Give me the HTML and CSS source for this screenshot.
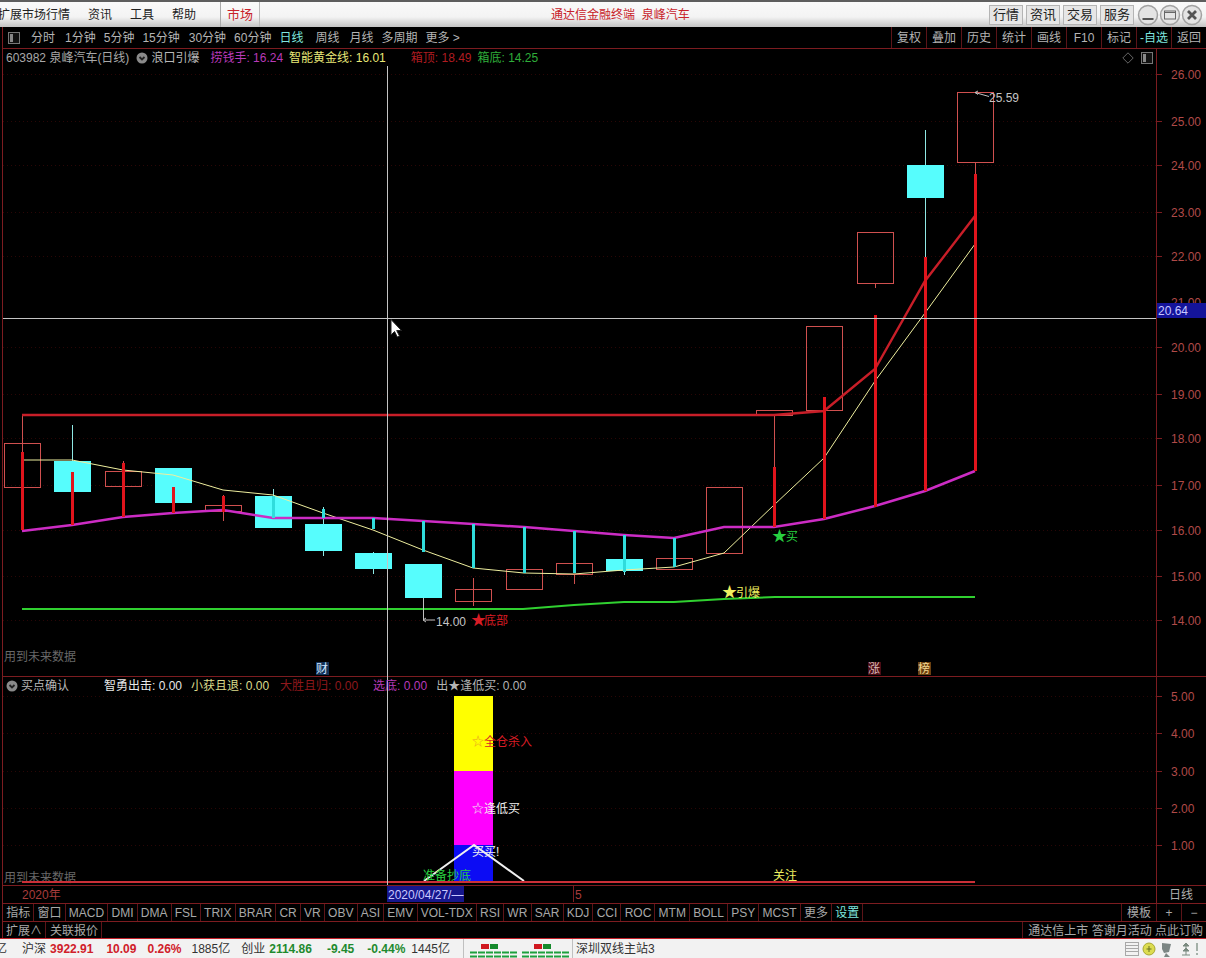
FILE: index.html
```html
<!DOCTYPE html>
<html lang="zh-CN">
<head>
<meta charset="utf-8">
<title>通达信金融终端 泉峰汽车</title>
<link rel="stylesheet" href="styles.css">
</head>
<body>
<div class="app">
  <header class="titlebar">
    <nav class="menu">
      <span class="menu-first">扩展市场行情</span><span>资讯</span><span>工具</span><span>帮助</span>
    </nav>
    <div class="market-tab">市场</div>
    <div class="app-title">通达信金融终端&nbsp;&nbsp;泉峰汽车</div>
    <div class="title-buttons">
      <span class="tbtn">行情</span><span class="tbtn">资讯</span><span class="tbtn">交易</span><span class="tbtn">服务</span>
    </div>
    <div class="win-controls">
      <svg class="win" viewBox="0 0 22 22"><circle class="win-ring" cx="11" cy="11" r="9.5"/><path class="win-glyph" d="M5.5 15h11"/></svg>
      <svg class="win" viewBox="0 0 22 22"><circle class="win-ring" cx="11" cy="11" r="9.5"/><rect class="win-glyph-thin" x="5.5" y="7" width="11" height="8"/><path class="win-glyph-thin" d="M5.5 8.5h11"/></svg>
      <svg class="win" viewBox="0 0 22 22"><circle class="win-ring" cx="11" cy="11" r="9.5"/><path class="win-glyph-x" d="M7 7l8 8M15 7l-8 8"/></svg>
    </div>
  </header>

  <div class="frame">
    <div class="toolbar">
      <svg class="panel-icon tool-icon" viewBox="0 0 12 12"><rect class="pi-box" x=".5" y=".5" width="11" height="11"/><rect class="pi-fill" x="2" y="2" width="3" height="8"/></svg>
      <div class="periods">
        <span class="p-first">分时</span><span>1分钟</span><span>5分钟</span><span>15分钟</span><span class="p-wide">30分钟</span><span>60分钟</span>
      </div>
      <div class="periods wide">
        <span class="cyan-t p-day">日线</span><span>周线</span><span class="p-month">月线</span><span>多周期</span><span>更多 &gt;</span>
      </div>
      <div class="tool-right">
        <span>复权</span><span>叠加</span><span>历史</span><span>统计</span><span>画线</span><span>F10</span><span>标记</span><span class="cyan-t">-自选</span><span>返回</span>
      </div>
    </div>

    <section class="panel panel-main">
      <div class="legend legend-main">
        <span class="l-code">603982 泉峰汽车(日线)</span>
        <svg class="chev" viewBox="0 0 12 12"><circle class="chev-c" cx="6" cy="6" r="5.5"/><path class="chev-p" d="M3.5 5l2.5 2.5L8.5 5"/></svg>
        <span class="l-name">浪口引爆</span>
        <span class="c-mag m-a">捞钱手: 16.24</span>
        <span class="c-yel m-b">智能黄金线: 16.01</span>
        <span class="c-red m-c">箱顶: 18.49</span>
        <span class="c-grn m-d">箱底: 14.25</span>
        <span class="legend-end">
          <svg class="diamond" viewBox="0 0 12 12"><path d="M6 .8L11.2 6 6 11.2.8 6z"/></svg>
          <svg class="panel-icon" viewBox="0 0 12 12"><rect class="pi-box" x=".5" y=".5" width="11" height="11"/><rect class="pi-fill" x="2" y="2" width="3" height="8"/></svg>
        </span>
      </div>
      <svg class="chart" width="1203" height="628" viewBox="3 48 1203 628">
        <g class="grid">
          <path d="M3 74.5H1156M3 121.5H1156M3 165.5H1156M3 212.5H1156M3 256.5H1156M3 347.5H1156M3 394.5H1156M3 438.5H1156M3 485.5H1156M3 530.5H1156M3 576.5H1156M3 620.5H1156"/>
        </g>

        <g class="wick-c">
          <path d="M72.5 425V461M273.5 489V496M323.5 507V556M373.5 552V574M423.5 598V620M925.5 130V258M624.5 571V575"/>
        </g>
        <g class="wick-r">
          <path d="M22.5 415V452M123.5 461V517M223.5 495V521M473.5 578V606M574.5 575V584M774.5 416V467M875.5 284V288M975.5 162V174"/>
        </g>

        <g class="body-c">
          <rect x="54" y="461" width="37" height="31"/>
          <rect x="155" y="468" width="37" height="35"/>
          <rect x="255" y="496" width="37" height="32"/>
          <rect x="305" y="524" width="37" height="27"/>
          <rect x="355" y="553" width="37" height="16"/>
          <rect x="405" y="564" width="37" height="34"/>
          <rect x="606" y="559" width="37" height="12"/>
          <rect x="907" y="165" width="37" height="33"/>
        </g>
        <g class="body-h">
          <rect x="4.5" y="443.5" width="36" height="44"/>
          <rect x="105.5" y="471.5" width="36" height="15"/>
          <rect x="205.5" y="505.5" width="36" height="6"/>
          <rect x="455.5" y="589.5" width="36" height="12"/>
          <rect x="506.5" y="569.5" width="36" height="20"/>
          <rect x="556.5" y="563.5" width="36" height="11"/>
          <rect x="656.5" y="558.5" width="36" height="11"/>
          <rect x="706.5" y="487.5" width="36" height="66"/>
          <rect x="756.5" y="410.5" width="36" height="5"/>
          <rect x="806.5" y="326.5" width="36" height="84"/>
          <rect x="857.5" y="232.5" width="36" height="51"/>
          <rect x="957.5" y="92.5" width="36" height="70"/>
        </g>

        <polyline class="ln-top" points="22,415 774,415 824,411 875,369 925,281 975,216"/>
        <polyline class="ln-yel" points="22,460 72,460 123,470 173,475 223,490 273,495 323,513 373,530 423,550 473,568 524,573 574,574 624,570 674,567 724,553 774,505 824,458 875,381 925,313 975,244"/>
        <polyline class="ln-mag" points="22,531 72,525 123,517 173,513 223,510 273,518 323,518 373,518 423,521 473,524 524,527 574,531 624,535 674,538 724,527 774,527 824,519 875,506 925,491 975,471"/>
        <polyline class="ln-grn" points="22,609 523,609 574,605 624,602 674,602 724,599 775,597 975,597"/>

        <g class="bar-r">
          <path d="M22.5 452V530M72.5 472V525M123.5 463V517M173.5 487V513M223.5 496V512M774.5 467V527M824.5 397V519M875.5 315V507M925.5 257V491M975.5 174V471"/>
        </g>
        <g class="bar-c">
          <path d="M273.5 496V518M323.5 509V518M373.5 518V529M423.5 521V552M473.5 524V568M524.5 527V573M574.5 531V573M624.5 535V572M674.5 538V567"/>
        </g>

        <path class="leader" d="M423.5 598V620H435M426 618l-3 2 3 2M975 92.5l14 4M978 91l-3 1.500 3 2"/>
        <text class="t t-white" x="989" y="102">25.59</text>
        <text class="t t-white" x="436" y="626">14.00</text>
        <text class="t t-red" x="471" y="625"><tspan class="star">★</tspan><tspan x="484">底部</tspan></text>
        <text class="t t-yel" x="722" y="597"><tspan class="star">★</tspan><tspan x="736">引爆</tspan></text>
        <text class="t t-grn" x="772" y="541"><tspan class="star">★</tspan><tspan x="786">买</tspan></text>
        <text class="t t-dim" x="4" y="661">用到未来数据</text>

        <rect class="tag-blue" x="316" y="662" width="13" height="13"/>
        <text class="t t-tag" x="316" y="673">财</text>
        <rect class="tag-red" x="868" y="662" width="13" height="13"/>
        <text class="t t-tag2" x="868" y="673">涨</text>
        <rect class="tag-gold" x="918" y="662" width="13" height="13"/>
        <text class="t t-tag3" x="918" y="673">榜</text>

        <path class="cross" d="M387.500 66V676M3 318.500H1156"/>
        <path class="axis" d="M1156.500 48V676M1156 74.500h6M1156 121.500h6M1156 165.500h6M1156 212.500h6M1156 256.500h6M1156 347.500h6M1156 394.500h6M1156 438.500h6M1156 485.500h6M1156 530.500h6M1156 576.500h6M1156 620.500h6"/>
        <g class="t t-axis">
          <text x="1171" y="79">26.00</text><text x="1171" y="126">25.00</text><text x="1171" y="170">24.00</text>
          <text x="1171" y="217">23.00</text><text x="1171" y="261">22.00</text><text x="1171" y="307">21.00</text>
          <text x="1171" y="352">20.00</text><text x="1171" y="399">19.00</text><text x="1171" y="443">18.00</text>
          <text x="1171" y="490">17.00</text><text x="1171" y="535">16.00</text><text x="1171" y="581">15.00</text>
          <text x="1171" y="625">14.00</text>
        </g>
        <rect class="price-box" x="1157" y="303" width="49" height="15"/>
        <text class="t t-price" x="1158" y="315">20.64</text>
        <path class="cursor" d="M391 319.500V335l3.500-3.500 2.800 5.500 2.200-1-2.800-5.500H401.500z"/>
      </svg>
    </section>

    <section class="panel panel-sub">
      <div class="legend legend-sub">
        <svg class="chev" viewBox="0 0 12 12"><circle class="chev-c" cx="6" cy="6" r="5.500"/><path class="chev-p" d="M3.500 5l2.500 2.500L8.500 5"/></svg>
        <span class="l-name s-0">买点确认</span>
        <span class="c-white s-a">智勇出击: 0.00</span>
        <span class="c-lyel s-b">小获且退: 0.00</span>
        <span class="c-dred s-b2">大胜且归: 0.00</span>
        <span class="c-mag s-c">选底: 0.00</span>
        <span class="c-gray s-d">出★逢低买: 0.00</span>
      </div>
      <svg class="chart" width="1203" height="209" viewBox="3 676 1203 209">
        <g class="grid"><path d="M3 696.500H1156M3 733.500H1156M3 771.500H1156M3 808.500H1156M3 845.500H1156"/></g>
        <rect class="b-yel" x="454" y="696" width="39" height="75"/>
        <rect class="b-mag" x="454" y="771" width="39" height="74"/>
        <rect class="b-blu" x="454" y="845" width="39" height="36"/>
        <polyline class="tri" points="424,881 474,845 524,881"/>
        <text class="t t-red" x="472" y="746"><tspan class="t-orange">☆</tspan>全仓杀入</text>
        <text class="t t-white2" x="472" y="813">☆逢低买</text>
        <text class="t t-white2" x="472" y="856">买买!</text>
        <text class="t t-grn" x="423" y="880">准备抄底</text>
        <text class="t t-yel" x="773" y="880">关注</text>
        <text class="t t-dim" x="4" y="882">用到未来数据</text>
        <path class="base" d="M22 882H975"/>
        <path class="cross" d="M387.500 676V885"/>
        <path class="axis" d="M1156.500 676V885M1156 696.500h6M1156 733.500h6M1156 771.500h6M1156 808.500h6M1156 845.500h6"/>
        <g class="t t-axis">
          <text x="1171" y="701">5.00</text><text x="1171" y="738">4.00</text><text x="1171" y="776">3.00</text><text x="1171" y="813">2.00</text><text x="1171" y="850">1.00</text>
        </g>
      </svg>
    </section>

    <div class="date-axis">
      <svg class="chart" width="1203" height="18" viewBox="3 885 1203 18">
        <rect class="date-box" x="387" y="886" width="77" height="16"/>
        <text class="t t-year" x="22" y="899">2020年</text>
        <text class="t t-date" x="388" y="899">2020/04/27/—</text>
        <path class="axis" d="M573.500 886V902M1156.500 885V903"/>
        <text class="t t-year" x="575" y="899">5</text>
        <text class="t t-gray" x="1169" y="899">日线</text>
      </svg>
    </div>

    <div class="tabs">
      <span>指标</span><span>窗口</span><span>MACD</span><span>DMI</span><span>DMA</span><span>FSL</span><span>TRIX</span><span>BRAR</span><span>CR</span><span>VR</span><span>OBV</span><span>ASI</span><span>EMV</span><span>VOL-TDX</span><span>RSI</span><span>WR</span><span>SAR</span><span>KDJ</span><span>CCI</span><span>ROC</span><span>MTM</span><span>BOLL</span><span>PSY</span><span>MCST</span><span>更多</span><span class="cyan-t">设置</span>
      <div class="tabs-right"><span>模板</span><span class="sym">+</span><span class="sym">−</span></div>
    </div>

    <div class="extbar">
      <span>扩展∧</span><span class="ext-rel">关联报价</span>
      <div class="notice">通达信上市 答谢月活动 点此订购</div>
    </div>
  </div>

  <footer class="status">
    <span class="s-cut">亿</span>
    <span class="s-lab">沪深</span>
    <b class="up n1">3922.91</b><b class="up n2">10.09</b><b class="up n3">0.26%</b>
    <span class="n3b">1885亿</span>
    <span class="s-lab2">创业</span>
    <b class="down n1">2114.86</b><b class="down n2b">-9.45</b><b class="down n3c">-0.44%</b>
    <span class="n3d">1445亿</span>
    <svg class="mini" width="110" height="20" viewBox="0 0 110 20">
      <path class="mini-sep" d="M.5 0V20M109.500 0V20"/>
      <rect class="m-r" x="18" y="5" width="8" height="5"/><rect class="m-g" x="27" y="5" width="8" height="5"/>
      <rect class="m-r" x="71" y="5" width="8" height="5"/><rect class="m-g" x="80" y="5" width="8" height="5"/>
      <path class="m-dash" d="M7 13.500h47M7 17.500h47M59 13.500h47M59 17.500h47"/>
    </svg>
    <span class="s-site">深圳双线主站3</span>
    <svg class="s-icons" width="80" height="20" viewBox="0 0 80 20">
      <rect class="ic-doc" x="1.500" y="3.500" width="13" height="13"/>
      <path class="ic-doc" d="M1.500 6.500h13M1.500 9.500h13M1.500 12.500h13"/>
      <circle class="ic-coin" cx="25" cy="10" r="6"/><path class="ic-coin-m" d="M22.500 10h5M25 7v6"/>
      <path class="ic-sat" d="M38 4l9 1-2 8-5 1-2-4zM42 14l-2 4h6z"/>
      <path class="ic-arr" d="M62 4l-3 3h6zM62 9l-3 3h6zM58 16h8M62 6v10"/>
      <path class="ic-ex" d="M73 4v8M73 14v2"/>
    </svg>
  </footer>
</div>
</body>
</html>
```
FILE: styles.css
```css
* { box-sizing: border-box; }
html, body { margin: 0; padding: 0; background: #000; }
body { font: 12px/1 "Liberation Sans", "Noto Sans CJK SC", sans-serif; }
.app { width: 1206px; height: 958px; overflow: hidden; display: flex; flex-direction: column; background: #000; }

/* title bar */
.titlebar { height: 27px; flex: none; display: flex; align-items: center; border-top: 2px solid #5e5e5e;
  background: linear-gradient(#fafafa, #f3f3f3 60%, #c4c4c4); color: #222; font-size: 12px; }
.menu { display: flex; gap: 18px; width: 222px; margin-left: -2px; flex: none; }
.menu span { white-space: nowrap; }
.market-tab { width: 40px; height: 25px; flex: none; display: flex; align-items: center; justify-content: center; font-size: 13px;
  color: #c8222a; border-left: 1px solid #aaa; border-right: 1px solid #bbb; }
.app-title { margin-left: 291px; width: 438px; flex: none; color: #c8222a; white-space: nowrap; }
.title-buttons { display: flex; gap: 3px; font-size: 13px; }
.tbtn { width: 34px; height: 20px; display: flex; align-items: center; justify-content: center;
  background: #e6e6e6; border: 1px solid #b4b4b4; color: #222; }
.win-controls { display: flex; margin-left: 3px; }
.win { width: 22px; height: 22px; display: block; }
.win-ring { fill: #e4e4e4; stroke: #a2a2a2; stroke-width: 1.500; }
.win-glyph { stroke: #555; stroke-width: 2; fill: none; }
.win-glyph-thin { stroke: #666; stroke-width: 1; fill: none; }
.win-glyph-x { stroke: #555; stroke-width: 2.800; fill: none; }

/* frame */
.frame { margin-left: 2px; border-left: 1px solid #7c1c20; flex: none; height: 911px; display: flex; flex-direction: column; }

.toolbar { height: 21px; flex: none; display: flex; align-items: center; color: #b4b4b4; }
.tool-icon { margin-left: 5px; }
.panel-icon { width: 12px; height: 12px; display: block; flex: none; }
.pi-box { fill: #111; stroke: #777; }
.pi-fill { fill: #888; }
.periods { display: flex; gap: 8px; margin-left: 11px; white-space: nowrap; }
.periods.wide { gap: 8px; margin-left: 8px; }
.p-first { margin-right: 2px; }
.p-wide { margin-left: 1px; }
.p-day { margin-right: 4px; }
.p-month { margin-right: 0; margin-left: 2px; }
.cyan-t { color: #7fe6de; }
.tool-right { margin-left: auto; display: flex; height: 21px; }
.tool-right span { width: 35px; display: flex; align-items: center; justify-content: center; border-left: 1px solid #5c1418; white-space: nowrap; }

/* panels */
.panel { position: relative; flex: none; border-top: 1px solid #7c1c20; }
.panel-main { height: 628px; }
.panel-sub { height: 209px; }
.chart { display: block; margin-top: -1px; }
.legend { position: absolute; left: 0; top: 0; right: 0; display: flex; align-items: center; height: 18px; color: #a8a8a8; white-space: nowrap; }
.legend-main { padding-left: 3px; }
.legend-sub { padding-left: 3px; }
.legend-end { position: absolute; left: 1119px; top: 3px; display: flex; gap: 7px; }
.chev { width: 12px; height: 12px; flex: none; margin-left: 7px; }
.legend-sub .chev { margin-left: 0; }
.chev-c { fill: #8a8a8a; }
.chev-p { fill: none; stroke: #222; stroke-width: 1.800; }
.diamond { width: 12px; height: 12px; fill: none; stroke: #666; }
.l-name { margin-left: 3px; color: #b8b8b8; }
.c-mag { color: #b83ab8; } .c-yel { color: #e8e878; } .c-red { color: #b01c20; } .c-grn { color: #2fae3a; }
.c-white { color: #e8e8e8; } .c-lyel { color: #dcdc8c; } .c-dred { color: #8e181c; } .c-gray { color: #b4b4b4; }
.m-a { margin-left: 11px; } .m-b { margin-left: 6px; } .m-c { margin-left: 25px; } .m-d { margin-left: 6px; }
.s-0 { margin-left: 3px; } .s-a { margin-left: 35px; } .s-b { margin-left: 9px; } .s-b2 { margin-left: 11px; } .s-c { margin-left: 15px; } .s-d { margin-left: 9px; }

/* svg drawing */
.grid path { stroke: #2a0606; stroke-dasharray: 1 3; fill: none; }
.wick-c path { stroke: #8fe8e4; fill: none; }
.wick-r path { stroke: #d0504f; fill: none; }
.body-c rect { fill: #56fdfd; }
.body-h rect { fill: none; stroke: #d0504f; }
.ln-top { fill: none; stroke: #c81e28; stroke-width: 2.400; }
.ln-yel { fill: none; stroke: #eeee9e; stroke-width: 1; }
.ln-mag { fill: none; stroke: #cc2cc4; stroke-width: 2.500; }
.ln-grn { fill: none; stroke: #30d030; stroke-width: 2; }
.bar-r path { stroke: #e0141c; stroke-width: 3; fill: none; }
.bar-c path { stroke: #30dcdc; stroke-width: 3; fill: none; }
.leader { stroke: #c0c0c0; fill: none; }
.cross { stroke: #c4c4c4; fill: none; }
.axis { stroke: #7c1c20; fill: none; }
.cursor { fill: #fff; stroke: #222; stroke-width: 1; }
.t { font: 12px "Liberation Sans", "Noto Sans CJK SC", sans-serif; }
.star { font-size: 15px; }
.t-white { fill: #c4c4c4; }
.t-white2 { fill: #f0f0f0; }
.t-red { fill: #d81c24; }
.t-orange { fill: #e8a020; }
.t-yel { fill: #f0f060; }
.t-grn { fill: #28d040; }
.t-dim { fill: #686868; }
.t-gray { fill: #b0b0b0; }
.t-axis { fill: #b04a48; }
.t-tag { fill: #cfe4ff; }
.t-tag2 { fill: #d8b8b8; }
.t-tag3 { fill: #f4d890; }
.tag-blue { fill: #123258; }
.tag-red { fill: #4a0c14; }
.tag-gold { fill: #6a4010; }
.price-box { fill: #14149a; }
.t-price { fill: #c8c8ff; }
.b-yel { fill: #ffff00; }
.b-mag { fill: #ff00ff; }
.b-blu { fill: #0c0cf4; }
.tri { fill: none; stroke: #f0f0f0; stroke-width: 2; }
.base { stroke: #cc3038; stroke-width: 2; fill: none; }
.date-axis { height: 18px; flex: none; border-top: 1px solid #7c1c20; }
.date-box { fill: #16168c; }
.t-date { fill: #c8c8ff; }
.t-year { fill: #a83c3c; }

/* tabs */
.tabs { height: 17px; flex: none; display: flex; align-items: center; color: #a8a8a8; border-top: 1px solid #7c1c20; border-bottom: 1px solid #7c1c20; box-sizing: content-box; white-space: nowrap; }
.tabs > span { height: 100%; padding: 0 3.160px; display: flex; align-items: center; border-right: 1px solid #5c1418; }
.tabs-right { margin-left: auto; display: flex; height: 100%; }
.tabs-right span { width: 35px; display: flex; align-items: center; justify-content: center; border-left: 1px solid #5c1418; }
.tabs-right .sym { width: 25px; }

.extbar { height: 17px; flex: none; display: flex; align-items: center; color: #a8a8a8; white-space: nowrap; }
.extbar > span { height: 100%; padding: 0 3px; display: flex; align-items: center; border-right: 1px solid #5c1418; }
.extbar > .ext-rel { padding-left: 4px; }
.notice { margin-left: auto; height: 100%; padding: 0 3px 0 5px; display: flex; align-items: center; border-left: 1px solid #5c1418; }

/* status */
.status { height: 20px; flex: none; border-top: 1px solid #c02028; background: #f2f2f2; color: #333; display: flex; align-items: center; white-space: nowrap; overflow: hidden; }
.status b { font-weight: 700; }
.up { color: #d0202a; } .down { color: #1e8a2e; }
.s-cut { margin-left: -5px; }
.s-lab { margin-left: 15px; } .n1 { margin-left: 4px; } .n2 { margin-left: 13px; } .n3 { margin-left: 11px; }
.n3b { margin-left: 10px; } .s-lab2 { margin-left: 11px; } .n2b { margin-left: 15px; } .n3c { margin-left: 13px; } .n3d { margin-left: 6px; }
.mini { margin-left: 13px; flex: none; }
.mini-sep { stroke: #c0c0c0; fill: none; }
.m-r { fill: #d01820; } .m-g { fill: #158a2c; }
.m-dash { stroke: #1ea03c; stroke-width: 2; stroke-dasharray: 7 1; fill: none; }
.s-site { margin-left: 3px; }
.s-icons { margin-left: auto; margin-right: 2px; flex: none; }
.ic-doc { fill: none; stroke: #a8a8a8; }
.ic-coin { fill: #dcdc50; stroke: #a8a830; }
.ic-coin-m { stroke: #667020; fill: none; }
.ic-sat { fill: #7c8684; }
.ic-arr { fill: #7a8a80; stroke: #7a8a80; }
.ic-ex { stroke: #8a9a90; stroke-width: 1.500; fill: none; }
```
